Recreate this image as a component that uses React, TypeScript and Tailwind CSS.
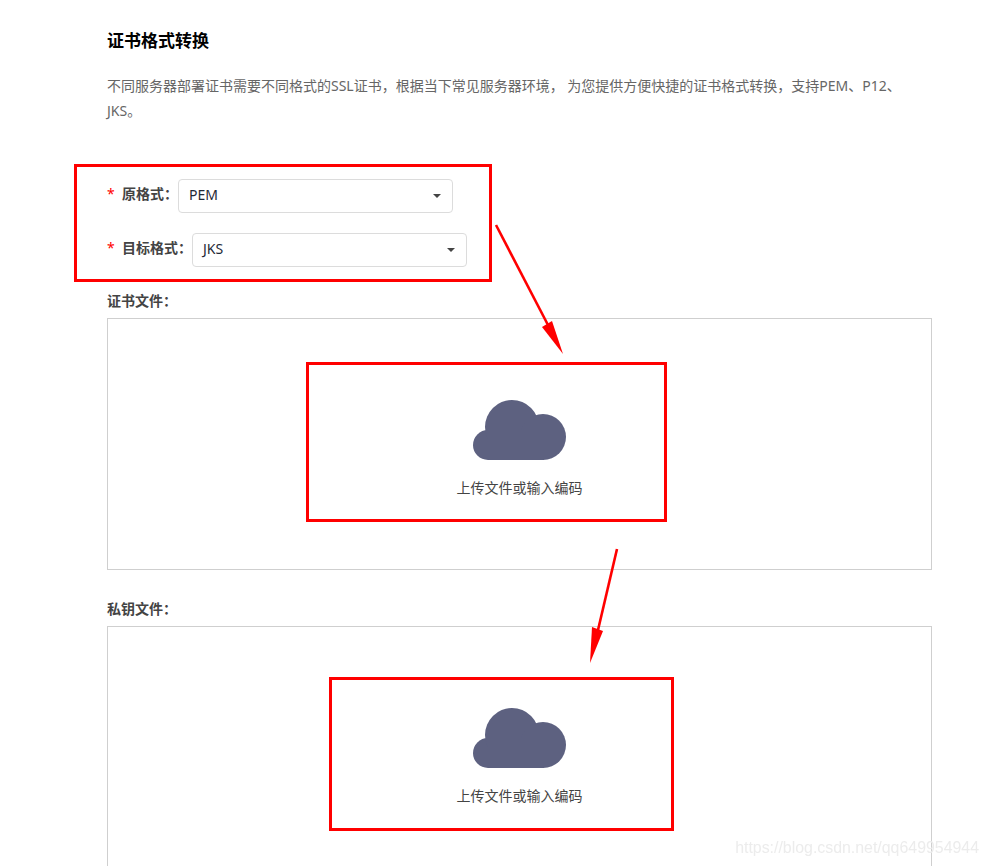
import React from "react";

const font = "font-['Noto_Sans','Noto_Sans_CJK_SC',sans-serif]";

function Cloud() {
  return (
    <svg width="94" height="60" viewBox="0 0 94 60" className="block">
      <g fill="#5d6180">
        <circle cx="15" cy="45" r="15" />
        <circle cx="39" cy="27" r="27" />
        <circle cx="70" cy="37" r="23" />
        <rect x="15" y="30" width="56" height="30" />
      </g>
    </svg>
  );
}

function FormRow({ label, value }: { label: string; value: string }) {
  return (
    <div className="flex items-center h-[34px]">
      <span className="text-[14px] leading-[20px] text-[#f00] w-[15px] -mt-[4px]">*</span>
      <span className="text-[14px] leading-[20px] font-semibold text-[#444] -mt-[4px] whitespace-nowrap">{label}&#xFF1A;</span>
      <div className="w-[275px] h-[34px] border border-[#dcdcdc] rounded-[4px] bg-white flex items-center justify-between pl-[10px] pr-[11px]">
        <span className="text-[14px] leading-[20px] -mt-[2px] text-[#1f2937]">{value}</span>
        <span className="w-0 h-0 border-l-[4px] border-r-[4px] border-t-[4px] border-l-transparent border-r-transparent border-t-[#444]" />
      </div>
    </div>
  );
}

function UploadBox({ label, height, labelGap }: { label: string; height: number; labelGap: string }) {
  return (
    <section className={labelGap}>
      <div className="text-[14px] leading-[20px] font-semibold text-[#444] mb-[7px]">{label}&#xFF1A;</div>
      <div
        className="w-[825px] border border-[#cfcfcf] flex flex-col items-center pt-[81px]"
        style={{ height }}
      >
        <Cloud />
        <div className="mt-[18px] text-[14px] leading-[20px] text-[#444]">上传文件或输入编码</div>
      </div>
    </section>
  );
}

export default function App() {
  return (
    <div className={`relative w-[988px] h-[866px] overflow-hidden bg-white ${font}`}>
      <main className="pl-[107px] pt-[29px]">
        <h1 className="text-[17px] leading-[24px] font-bold text-black">证书格式转换</h1>
        <p className="mt-[20px] w-[810px] text-[14px] leading-[25px] text-[#666]">
          不同服务器部署证书需要不同格式的SSL证书&#xFF0C;根据当下常见服务器环境&#xFF0C; 为您提供方便快捷的证书格式转换&#xFF0C;支持PEM、P12、JKS。
        </p>
        <div className="mt-[56px] flex flex-col gap-[20px]">
          <FormRow label="原格式" value="PEM" />
          <FormRow label="目标格式" value="JKS" />
        </div>
        <UploadBox label="证书文件" height={252} labelGap="mt-[24px]" />
        <UploadBox label="私钥文件" height={300} labelGap="mt-[29px]" />
      </main>

      {/* annotations drawn over the page */}
      <div className="absolute left-[74px] top-[164px] w-[418px] h-[118px] border-[3px] border-[#f00]" />
      <div className="absolute left-[306px] top-[362px] w-[361px] h-[160px] border-[3px] border-[#f00]" />
      <div className="absolute left-[329px] top-[677px] w-[345px] h-[154px] border-[3px] border-[#f00]" />
      <svg className="absolute left-0 top-0 pointer-events-none" width="988" height="866">
        <line x1="496" y1="225" x2="548" y2="325" stroke="#f00" strokeWidth="2.6" />
        <polygon points="563,354 542,327 552,321" fill="#f00" />
        <line x1="617" y1="549" x2="598" y2="630" stroke="#f00" strokeWidth="2.6" />
        <polygon points="590,663 592,627 603,631" fill="#f00" />
      </svg>
      <div className="absolute right-[9px] top-[838px] text-[15.9px] leading-[20px] text-[#ececec] font-['Liberation_Sans',sans-serif] blur-[0.4px]">
        https://blog.csdn.net/qq649954944
      </div>
    </div>
  );
}
